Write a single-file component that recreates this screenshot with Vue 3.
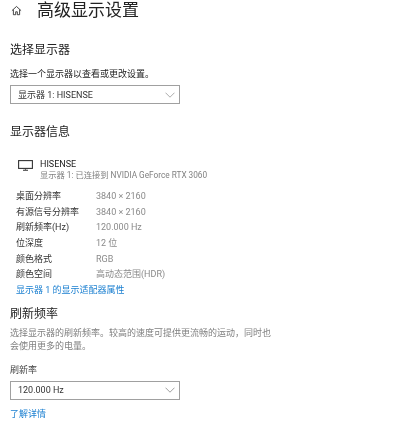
<script setup>
const rows = [
  ['桌面分辨率', '3840 × 2160'],
  ['有源信号分辨率', '3840 × 2160'],
  ['刷新频率(Hz)', '120.000 Hz'],
  ['位深度', '12 位'],
  ['颜色格式', 'RGB'],
  ['颜色空间', '高动态范围(HDR)'],
]
</script>

<template>
  <div class="page">
    <header class="top">
      <svg class="home" viewBox="0 0 12 12" width="11" height="11" fill="none" stroke="#222" stroke-width="0.9">
        <path d="M1 6.2 6 1.6l5 4.6M2.6 5v5.6h2.5V7.4h1.8v3.2h2.5V5" />
      </svg>
      <h1>高级显示设置</h1>
    </header>

    <h2 class="h-select">选择显示器</h2>
    <p class="hint">选择一个显示器以查看或更改设置。</p>
    <div class="select">
      <span>显示器 1: HISENSE</span>
      <svg viewBox="0 0 10 6" width="10" height="6" fill="none" stroke="#888" stroke-width="0.7"><path d="M.5.7 5 5.2 9.5.7" /></svg>
    </div>

    <h2 class="h-info">显示器信息</h2>
    <div class="monitor">
      <svg class="screen" viewBox="0 0 15 11" width="15" height="11" fill="none" stroke="#333" stroke-width="1.1">
        <rect x="0.6" y="0.6" width="13.8" height="7.8" />
        <path d="M7.5 8.4v1.2M5 10.2h5" />
      </svg>
      <div class="monitor-text">
        <div class="name">HISENSE</div>
        <div class="sub">显示器 1: 已连接到 NVIDIA GeForce RTX 3060</div>
      </div>
    </div>
    <div class="rows">
      <div v-for="r in rows" :key="r[0]" class="row">
        <span class="label">{{ r[0] }}</span>
        <span class="value">{{ r[1] }}</span>
      </div>
      <div class="row link">显示器 1 的显示适配器属性</div>
    </div>

    <h2 class="h-rate">刷新频率</h2>
    <p class="desc">选择显示器的刷新频率。较高的速度可提供更流畅的运动，同时也<br />会使用更多的电量。</p>
    <p class="rate-label">刷新率</p>
    <div class="select rate">
      <span>120.000 Hz</span>
      <svg viewBox="0 0 10 6" width="10" height="6" fill="none" stroke="#777" stroke-width="0.7"><path d="M.5.7 5 5.2 9.5.7" /></svg>
    </div>
    <div class="more">了解详情</div>
  </div>
</template>

<style scoped>
.page {
  width: 401px;
  height: 431px;
  overflow: hidden;
  background: #fff;
  color: #222;
  box-sizing: border-box;
  padding-left: 10px;
  font-family: Roboto, "Noto Sans CJK SC", sans-serif;
  font-size: 9px;
  filter: blur(0.3px);
}
h1, h2, p { margin: 0; font-weight: 400; }
.top { display: flex; align-items: center; height: 20px; gap: 15px; padding-left: 1px; }
h1 { font-size: 17px; line-height: 20px; color: #222; }
h2 { font-size: 12px; line-height: 16px; color: #222; }
.h-select { margin-top: 22px; }
.hint { margin-top: 10px; line-height: 13px; }
.select {
  box-sizing: border-box;
  width: 170px;
  height: 19px;
  margin-top: 4px;
  border: 1.5px solid #a0a0a0;
  display: flex;
  align-items: center;
  justify-content: space-between;
  padding: 0 4px 0 7px;
  color: #333;
}
.h-info { margin-top: 20px; }
.monitor { display: flex; margin-top: 19px; padding-left: 8px; gap: 7px; align-items: flex-start; }
.screen { margin-top: 1px; }
.monitor-text { line-height: 11px; }
.name { color: #222; }
.sub { color: #808080; font-size: 8.25px; }
.rows { margin-top: 8px; padding-left: 6px; }
.row { display: flex; height: 15.7px; line-height: 15.7px; }
.label { width: 80px; color: #333; }
.value { color: #8a8a8a; }
.link { color: #1a7fd0; }
.h-rate { margin-top: 7px; }
.desc { margin-top: 5px; line-height: 13px; color: #808080; }
.rate-label { margin-top: 11px; line-height: 12px; color: #444; }
.rate { margin-top: 5px; }
.more { margin-top: 8px; color: #1a7fd0; line-height: 12px; }
</style>

<style>
html, body { margin: 0; background: #fff; }
</style>
